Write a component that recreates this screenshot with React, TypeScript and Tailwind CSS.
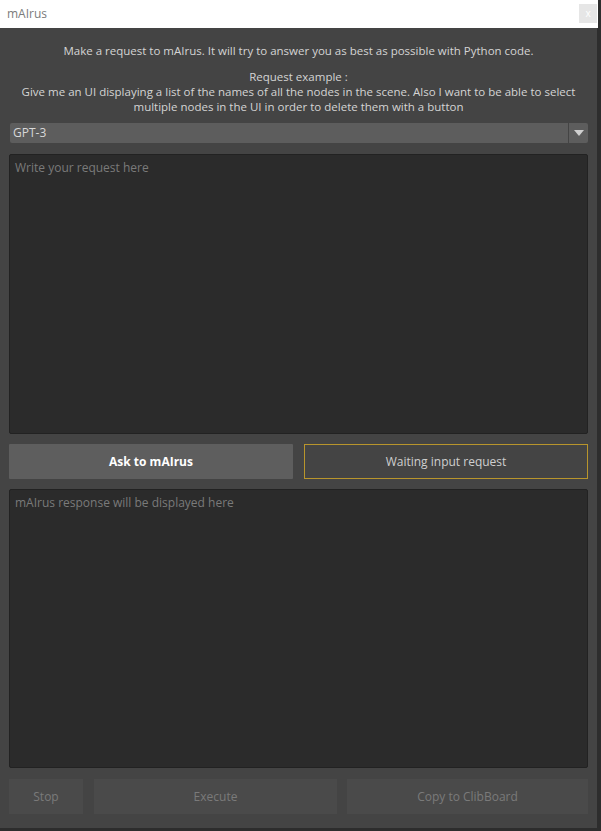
export default function App() {
  return (
    <div
      className="w-[601px] h-[831px] bg-[#2d2d2d] flex flex-col text-[12px]"
      style={{ fontFamily: '"Open Sans", "Noto Sans", sans-serif' }}
    >
      <div className="flex w-[598px] h-[28px] shrink-0 items-center justify-between bg-white pl-[7px] pr-[1px]">
        <span className="text-[#7b7b7b] text-[12px]">mAIrus</span>
        <div className="w-[18px] h-[19px] bg-[#e6e6e6] text-white text-[10px] flex items-center justify-center mb-[1px]">
          x
        </div>
      </div>

      <div className="flex flex-col w-[597px] h-[800px] bg-[#444444] px-[9px]">
        <p className="text-center text-[#d4d4d4] text-[11.5px] mt-[14px] leading-[18px]">
          Make a request to mAIrus. It will try to answer you as best as possible with Python code.
        </p>
        <div className="text-center text-[#d4d4d4] text-[11.5px] mt-[9px] leading-[15px] px-[12px]">
          <p>Request example :</p>
          <p>
            Give me an UI displaying a list of the names of all the nodes in the scene. Also I want to be able to select
            multiple nodes in the UI in order to delete them with a button
          </p>
        </div>

        <div className="flex h-[20px] mt-[9px] ml-[1px] rounded-[2px] overflow-hidden">
          <div className="flex-1 bg-[#5d5d5d] text-[#d8d8d8] px-[3px] flex items-center">GPT-3</div>
          <div className="w-[19px] ml-[1px] bg-[#5d5d5d] flex items-center justify-center">
            <svg width="10" height="6" viewBox="0 0 10 6">
              <path d="M0 0 H10 L5 6 Z" fill="#cfcfcf" />
            </svg>
          </div>
        </div>

        <div className="h-[280px] mt-[11px] bg-[#2b2b2b] border border-[#222] rounded-[2px] px-[5px] py-[4px] text-[#7a7a7a]">
          Write your request here
        </div>

        <div className="flex h-[35px] mt-[10px] gap-[11px]">
          <div className="w-[284px] bg-[#5e5e5e] rounded-[1px] flex items-center justify-center text-white font-bold">
            Ask to mAIrus
          </div>
          <div className="flex-1 border border-[#b8952c] flex items-center justify-center text-[#cfcfcf]">
            Waiting input request
          </div>
        </div>

        <div className="h-[279px] mt-[10px] bg-[#2b2b2b] border border-[#222] rounded-[2px] px-[5px] py-[4px] text-[#7a7a7a]">
          mAIrus response will be displayed here
        </div>

        <div className="flex h-[35px] mt-[11px] text-[#7a7a7a]">
          <div className="w-[74px] bg-[#4a4a4a] flex items-center justify-center">Stop</div>
          <div className="w-[243px] ml-[11px] bg-[#4a4a4a] flex items-center justify-center">Execute</div>
          <div className="flex-1 ml-[10px] bg-[#4a4a4a] flex items-center justify-center">Copy to ClibBoard</div>
        </div>
      </div>
    </div>
  );
}
